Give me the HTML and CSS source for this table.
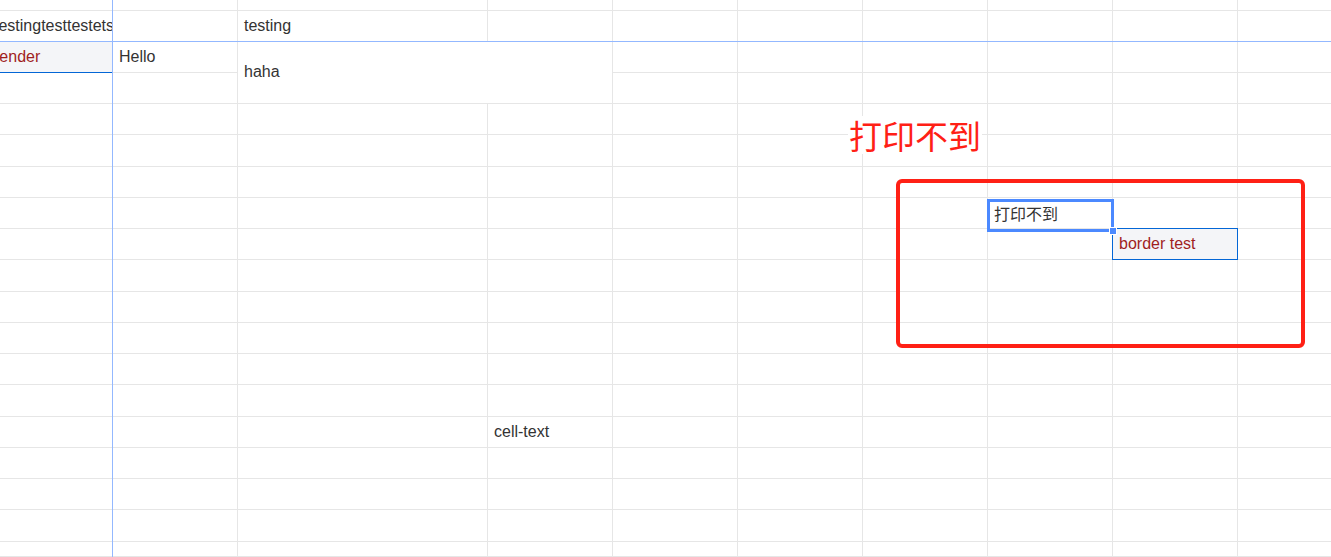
FILE: index.html
```html
<!DOCTYPE html>
<html lang="zh">
<head>
<meta charset="utf-8">
<title>Sheet</title>
<link rel="stylesheet" href="styles.css">
</head>
<body>
<div class="sheet">
  <div class="grid">
    <!-- row 0 (partial) -->
    <div class="c"></div><div class="c"></div><div class="c"></div><div class="c"></div><div class="c"></div>
    <div class="c"></div><div class="c"></div><div class="c"></div><div class="c"></div><div class="c"></div>
    <!-- row 1 -->
    <div class="c">testingtesttestetst</div><div class="c"></div><div class="c">testing</div><div class="c"></div><div class="c"></div>
    <div class="c"></div><div class="c"></div><div class="c"></div><div class="c"></div><div class="c"></div>
    <!-- row 2 -->
    <div class="c styled">render</div><div class="c">Hello</div><div class="c merge">haha</div>
    <div class="c"></div><div class="c"></div><div class="c"></div><div class="c"></div><div class="c"></div><div class="c"></div>
    <!-- row 3 -->
    <div class="c"></div><div class="c"></div>
    <div class="c"></div><div class="c"></div><div class="c"></div><div class="c"></div><div class="c"></div><div class="c"></div>
    <!-- row 4 -->
    <div class="c"></div><div class="c"></div><div class="c"></div><div class="c"></div><div class="c"></div>
    <div class="c"></div><div class="c"></div><div class="c"></div><div class="c"></div><div class="c"></div>
    <!-- row 5 -->
    <div class="c"></div><div class="c"></div><div class="c"></div><div class="c"></div><div class="c"></div>
    <div class="c"></div><div class="c"></div><div class="c"></div><div class="c"></div><div class="c"></div>
    <!-- row 6 -->
    <div class="c"></div><div class="c"></div><div class="c"></div><div class="c"></div><div class="c"></div>
    <div class="c"></div><div class="c"></div><div class="c"></div><div class="c"></div><div class="c"></div>
    <!-- row 7 -->
    <div class="c"></div><div class="c"></div><div class="c"></div><div class="c"></div><div class="c"></div>
    <div class="c"></div><div class="c"></div><div class="c">打印不到</div><div class="c"></div><div class="c"></div>
    <!-- row 8 -->
    <div class="c"></div><div class="c"></div><div class="c"></div><div class="c"></div><div class="c"></div>
    <div class="c"></div><div class="c"></div><div class="c"></div><div class="c styled">border test</div><div class="c"></div>
    <!-- row 9 -->
    <div class="c"></div><div class="c"></div><div class="c"></div><div class="c"></div><div class="c"></div>
    <div class="c"></div><div class="c"></div><div class="c"></div><div class="c"></div><div class="c"></div>
    <!-- row 10 -->
    <div class="c"></div><div class="c"></div><div class="c"></div><div class="c"></div><div class="c"></div>
    <div class="c"></div><div class="c"></div><div class="c"></div><div class="c"></div><div class="c"></div>
    <!-- row 11 -->
    <div class="c"></div><div class="c"></div><div class="c"></div><div class="c"></div><div class="c"></div>
    <div class="c"></div><div class="c"></div><div class="c"></div><div class="c"></div><div class="c"></div>
    <!-- row 12 -->
    <div class="c"></div><div class="c"></div><div class="c"></div><div class="c"></div><div class="c"></div>
    <div class="c"></div><div class="c"></div><div class="c"></div><div class="c"></div><div class="c"></div>
    <!-- row 13 -->
    <div class="c"></div><div class="c"></div><div class="c"></div><div class="c"></div><div class="c"></div>
    <div class="c"></div><div class="c"></div><div class="c"></div><div class="c"></div><div class="c"></div>
    <!-- row 14 -->
    <div class="c"></div><div class="c"></div><div class="c"></div><div class="c">cell-text</div><div class="c"></div>
    <div class="c"></div><div class="c"></div><div class="c"></div><div class="c"></div><div class="c"></div>
    <!-- row 15 -->
    <div class="c"></div><div class="c"></div><div class="c"></div><div class="c"></div><div class="c"></div>
    <div class="c"></div><div class="c"></div><div class="c"></div><div class="c"></div><div class="c"></div>
    <!-- row 16 -->
    <div class="c"></div><div class="c"></div><div class="c"></div><div class="c"></div><div class="c"></div>
    <div class="c"></div><div class="c"></div><div class="c"></div><div class="c"></div><div class="c"></div>
    <!-- row 17 -->
    <div class="c"></div><div class="c"></div><div class="c"></div><div class="c"></div><div class="c"></div>
    <div class="c"></div><div class="c"></div><div class="c"></div><div class="c"></div><div class="c"></div>
    <!-- row 18 (partial) -->
    <div class="c"></div><div class="c"></div><div class="c"></div><div class="c"></div><div class="c"></div>
    <div class="c"></div><div class="c"></div><div class="c"></div><div class="c"></div><div class="c"></div>
  </div>

  <div class="freeze-v"></div>
  <div class="freeze-h"></div>

  <div class="note">打印不到</div>
  <div class="print-area"></div>
  <div class="selector"><span class="selector-corner"></span></div>
</div>
</body>
</html>
```

FILE: styles.css
```css
* {
  box-sizing: border-box;
}

html,
body {
  margin: 0;
  padding: 0;
  background: #ffffff;
}

body {
  width: 1331px;
  height: 557px;
  overflow: hidden;
  font-family: "Liberation Sans", "Noto Sans CJK SC", sans-serif;
}

.sheet {
  position: relative;
  width: 1331px;
  height: 557px;
  overflow: hidden;
}

.grid {
  display: grid;
  grid-template-columns: 125px 125px 250px repeat(7, 125px);
  grid-template-rows:
    11px 31px 31px 31px 31px 32px 31px 31px 31px 32px
    31px 31px 31px 32px 31px 31px 31px 32px 15px;
  margin-left: -12px;
  width: 1375px;
}

.c {
  display: flex;
  align-items: center;
  min-width: 0;
  padding: 0 5px 1px 6px;
  overflow: hidden;
  white-space: nowrap;
  border-right: 1px solid #e6e6e6;
  border-bottom: 1px solid #e6e6e6;
  font-size: 16px;
  color: #333333;
}

.styled {
  background: #f4f5f8;
  color: #a01e1e;
  border-right-color: #0366d6;
  border-bottom-color: #0366d6;
  box-shadow: -1px 0 0 #0366d6, 0 -1px 0 #0366d6, -1px -1px 0 #0366d6;
}

.merge {
  grid-column: span 2;
  grid-row: span 2;
}

.freeze-v {
  position: absolute;
  left: 112px;
  top: 0;
  width: 1px;
  height: 100%;
  background: #93b8ff;
}

.freeze-h {
  position: absolute;
  left: 0;
  top: 41px;
  width: 100%;
  height: 1px;
  background: #93b8ff;
}

.note {
  position: absolute;
  left: 848px;
  top: 116px;
  height: 38px;
  line-height: 38px;
  padding: 0 1px;
  background: #ffffff;
  color: #ff2015;
  font-size: 33px;
  font-family: "Noto Sans CJK SC", sans-serif;
}

.print-area {
  position: absolute;
  left: 896px;
  top: 179px;
  width: 409px;
  height: 169px;
  border: 4px solid #ff2015;
  border-radius: 6px;
}

.selector {
  position: absolute;
  left: 987px;
  top: 199px;
  width: 127px;
  height: 33px;
  border: 3px solid #4b89ff;
}

.selector-corner {
  position: absolute;
  right: -6px;
  bottom: -6px;
  width: 8px;
  height: 8px;
  background: #4b89ff;
  border: 1px solid #ffffff;
}
```
